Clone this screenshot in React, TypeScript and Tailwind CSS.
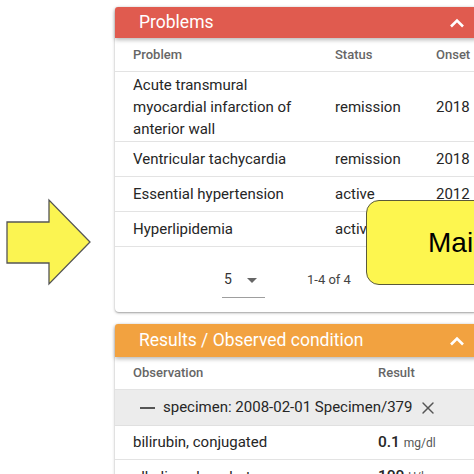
import { X } from 'lucide-react';

const FONT = { fontFamily: 'Roboto, "Noto Sans", sans-serif' };

const PROBLEMS = [
  { name: 'Acute transmural myocardial infarction of anterior wall', status: 'remission', onset: '2018', tall: true },
  { name: 'Ventricular tachycardia', status: 'remission', onset: '2018' },
  { name: 'Essential hypertension', status: 'active', onset: '2012' },
  { name: 'Hyperlipidemia', status: 'active', onset: '2012' },
];

function ChevronUp() {
  return (
    <svg width="16" height="10" viewBox="0 0 16 10" className="text-white shrink-0">
      <polyline points="2,8.5 8,2.5 14,8.5" fill="none" stroke="currentColor" strokeWidth="2.6" />
    </svg>
  );
}

function CardHeader({ title, color, h }: { title: string; color: string; h: string }) {
  return (
    <div
      className={`relative z-10 flex items-center justify-between pl-[24px] pr-[12px] rounded-t-[3px] shadow-[0_2px_4px_rgba(0,0,0,0.28)] ${color} ${h}`}
    >
      <span className="text-[17.5px] text-white leading-none">{title}</span>
      <ChevronUp />
    </div>
  );
}

export default function App() {
  return (
    <div className="relative w-[474px] h-[474px] overflow-hidden bg-white" style={FONT}>
      <div className="pt-[7px] ml-[115px] w-[362px] flex flex-col gap-[12px]">
        {/* Problems card */}
        <section className="rounded-[4px] bg-white shadow-[0_1px_3px_rgba(0,0,0,0.3),0_1px_1px_rgba(0,0,0,0.12)]">
          <CardHeader title="Problems" color="bg-[#e05b4f]" h="h-[31px]" />
          <div className="grid grid-cols-[202px_101px_1fr] pl-[18px] h-[34px] items-center border-b border-[#e3e3e3] text-[13px] font-medium text-[#666]">
            <span>Problem</span>
            <span>Status</span>
            <span>Onset</span>
          </div>
          {PROBLEMS.map((p) => (
            <div
              key={p.name}
              className={`grid grid-cols-[202px_101px_1fr] pl-[18px] items-center border-b border-[#e3e3e3] text-[15px] leading-[22px] text-[#262626] ${
                p.tall ? 'h-[70px]' : 'h-[35px]'
              }`}
            >
              <span className="pr-[30px]">{p.name}</span>
              <span>{p.status}</span>
              <span>{p.onset}</span>
            </div>
          ))}
          <div className="h-[65px] flex items-center pl-[107px]">
            <div className="w-[43px] h-[28px] border-b border-[#9e9e9e] mt-[9px] relative">
              <span className="absolute left-[2px] top-[-1px] text-[14px] text-[#333]">5</span>
              <svg width="10" height="5" viewBox="0 0 10 5" className="absolute left-[25px] top-[8px]">
                <polygon points="0,0 10,0 5,5" fill="#666" />
              </svg>
            </div>
            <span className="ml-[42px] text-[13px] text-[#444]">1-4 of 4</span>
          </div>
        </section>

        {/* Results card */}
        <section className="rounded-[4px] bg-white shadow-[0_1px_3px_rgba(0,0,0,0.3),0_1px_1px_rgba(0,0,0,0.12)]">
          <CardHeader title="Results / Observed condition" color="bg-[#f2a240]" h="h-[33px]" />
          <div className="grid grid-cols-[245px_1fr] pl-[18px] h-[33px] items-center border-b border-[#e3e3e3] text-[13px] font-medium text-[#666]">
            <span>Observation</span>
            <span>Result</span>
          </div>
          <div className="h-[36px] flex items-center bg-[#ececec] border-b border-[#e0e0e0] pl-[25px] text-[15px] text-[#262626]">
            <span className="w-[15px] h-[2px] bg-[#555] mr-[8px]" />
            <span>specimen: 2008-02-01 Specimen/379</span>
            <X size={20} strokeWidth={1.7} className="ml-[6px] text-[#555]" />
          </div>
          <div className="grid grid-cols-[245px_1fr] pl-[18px] h-[34px] items-center border-b border-[#e3e3e3] text-[15px] text-[#262626]">
            <span>bilirubin, conjugated</span>
            <span>
              <span className="font-medium text-[15.5px]">0.1</span>{' '}
              <span className="text-[12px] text-[#555]">mg/dl</span>
            </span>
          </div>
          <div className="grid grid-cols-[245px_1fr] pl-[18px] h-[34px] items-center text-[15px] text-[#262626]">
            <span>alkaline phosphatase</span>
            <span>
              <span className="font-medium text-[15.5px]">100</span>{' '}
              <span className="text-[12px] text-[#555]">U/l</span>
            </span>
          </div>
        </section>
      </div>

      {/* annotation arrow */}
      <svg width="100" height="100" viewBox="0 0 100 100" className="absolute left-0 top-[190px]">
        <polygon
          points="7,32 49,32 49,10 90,52 49,94 49,73 7,73"
          fill="#fbf451"
          stroke="#555"
          strokeWidth="1.3"
        />
      </svg>

      {/* annotation callout */}
      <div
        className="absolute left-[366px] top-[200px] w-[160px] h-[85px] rounded-[13px] bg-[#fdf64f] border-[1.5px] border-[#5a5a3a] flex items-center pl-[61px]"
        style={{ fontFamily: '"Liberation Sans", Arial, sans-serif' }}
      >
        <span className="text-[28px] text-black leading-none">Main</span>
      </div>
    </div>
  );
}
